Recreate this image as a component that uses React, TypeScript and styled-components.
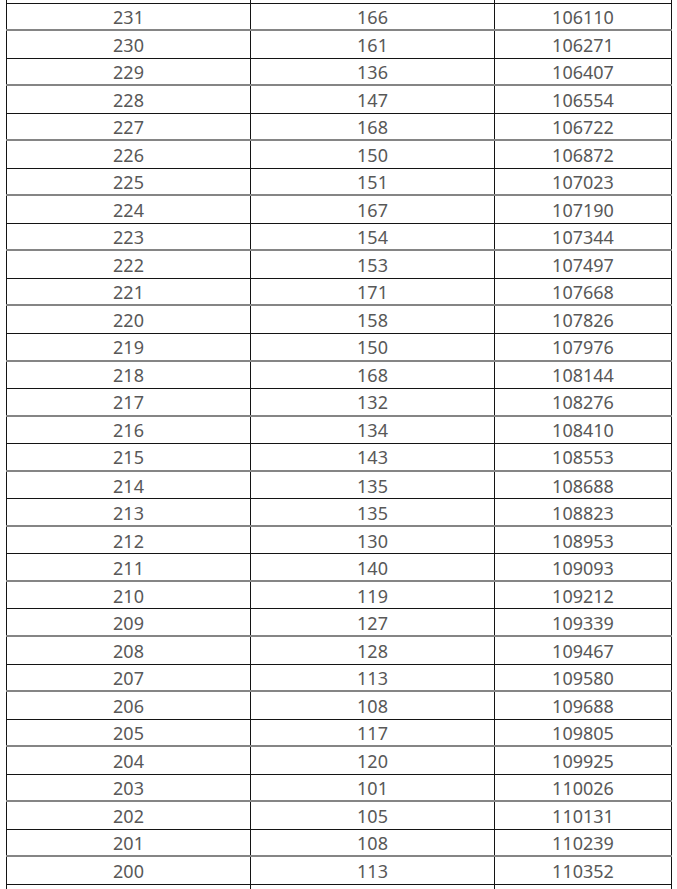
import styled, { createGlobalStyle } from "styled-components";

const GlobalStyle = createGlobalStyle`
  html, body {
    margin: 0;
    padding: 0;
    background: #ffffff;
    overflow: hidden;
  }
`;

const rows: [number, number, number][] = [
  [231, 166, 106110],
  [230, 161, 106271],
  [229, 136, 106407],
  [228, 147, 106554],
  [227, 168, 106722],
  [226, 150, 106872],
  [225, 151, 107023],
  [224, 167, 107190],
  [223, 154, 107344],
  [222, 153, 107497],
  [221, 171, 107668],
  [220, 158, 107826],
  [219, 150, 107976],
  [218, 168, 108144],
  [217, 132, 108276],
  [216, 134, 108410],
  [215, 143, 108553],
  [214, 135, 108688],
  [213, 135, 108823],
  [212, 130, 108953],
  [211, 140, 109093],
  [210, 119, 109212],
  [209, 127, 109339],
  [208, 128, 109467],
  [207, 113, 109580],
  [206, 108, 109688],
  [205, 117, 109805],
  [204, 120, 109925],
  [203, 101, 110026],
  [202, 105, 110131],
  [201, 108, 110239],
  [200, 113, 110352],
];

const Page = styled.div`
  padding-left: 6px;
  height: 889px;
  font-family: "Noto Sans", "Open Sans", sans-serif;
  color: #585858;
`;

const Table = styled.div`
  width: 666px;
  display: flex;
  flex-direction: column;
`;

const Row = styled.div<{ $h: number; $line?: "dark" | "grey"; $top?: boolean }>`
  display: grid;
  grid-template-columns: 244px 244px 178px;
  height: ${(p) => p.$h}px;
  box-sizing: border-box;
  border-top: ${(p) => (p.$top ? "1px solid #141414" : "none")};
  border-bottom: ${(p) =>
    p.$line === "grey"
      ? "2px solid #858585"
      : p.$line === "dark"
      ? "1px solid #141414"
      : "none"};
`;

const Cell = styled.div<{ $last?: boolean }>`
  display: flex;
  align-items: center;
  justify-content: center;
  border-left: 1px solid #141414;
  border-right: ${(p) => (p.$last ? "1px solid #141414" : "none")};
  font-size: 18px;
  line-height: 1;
  padding-top: 1px;
`;

export default function App() {
  return (
    <>
      <GlobalStyle />
      <Page>
        <Table>
          <Row $h={3}>
            <Cell />
            <Cell />
            <Cell $last />
          </Row>
          {rows.map(([score, count, total], i) => (
            <Row
              key={score}
              $h={i === 0 ? 28 : 27.56}
              $top={i === 0}
              $line={i % 2 === 0 ? "grey" : "dark"}
            >
              <Cell>{score}</Cell>
              <Cell>{count}</Cell>
              <Cell $last>{total}</Cell>
            </Row>
          ))}
          <Row $h={6}>
            <Cell />
            <Cell />
            <Cell $last />
          </Row>
        </Table>
      </Page>
    </>
  );
}
